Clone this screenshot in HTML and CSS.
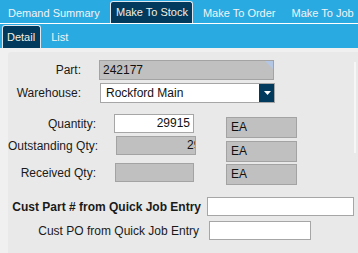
FILE: index.html
```html
<!DOCTYPE html>
<html>
<head>
<meta charset="utf-8">
<link rel="stylesheet" href="styles.css">
</head>
<body>
<div class="tabbar top">
  <div class="tab">Demand Summary</div>
  <div class="tab active">Make To Stock</div>
  <div class="tab">Make To Order</div>
  <div class="tab">Make To Job</div>
</div>
<div class="tabbar sub">
  <div class="tab active detail">Detail</div>
  <div class="tab">List</div>
</div>
<div class="content">
  <div class="panel">
    <div class="form">
      <div class="row part-row">
        <div class="label w73">Part:</div>
        <div class="field ro part">242177</div>
      </div>
      <div class="row wh-row">
        <div class="label w73">Warehouse:</div>
        <div class="field combo"><span class="combo-text">Rockford Main</span><span class="combo-btn"><svg width="7" height="4" viewBox="0 0 7 4"><path d="M0 0H7L3.5 4Z" fill="#fff"/></svg></span></div>
      </div>
      <div class="qty">
        <div class="qty-left">
          <div class="row">
            <div class="label w88">Quantity:</div>
            <div class="field num q1">29915</div>
          </div>
          <div class="row r2">
            <div class="label w89">Outstanding Qty:</div>
            <div class="field ro q2"><span class="clip">29915</span></div>
          </div>
          <div class="row r3">
            <div class="label w88">Received Qty:</div>
            <div class="field ro q3"></div>
          </div>
        </div>
        <div class="qty-right">
          <div class="field ro ea e1">EA</div>
          <div class="field ro ea e2">EA</div>
          <div class="field ro ea e3">EA</div>
        </div>
      </div>
      <div class="row cp-row">
        <div class="label bold w193">Cust Part # from Quick Job Entry</div>
        <div class="field cp"></div>
      </div>
      <div class="row po-row">
        <div class="label w191">Cust PO from Quick Job Entry</div>
        <div class="field po"></div>
      </div>
    </div>
    <div class="edge"></div>
  </div>
</div>
</body>
</html>
```

FILE: styles.css
```css
html, body {
  margin: 0;
  padding: 0;
}
body {
  width: 358px;
  height: 253px;
  overflow: hidden;
  background: #f0f0f0;
  font-family: "Liberation Sans", Arial, sans-serif;
  color: #1a1a1a;
}
.tabbar {
  display: flex;
  align-items: flex-end;
  background: #29aae1;
  white-space: nowrap;
  overflow: hidden;
}
.tabbar.top {
  height: 23px;
  border-bottom: 1px solid #ffffff;
}
.tabbar.sub {
  height: 24px;
}
.tab {
  flex: none;
  padding: 0 8px;
  font-size: 11px;
  color: #f2f4f6;
  height: 100%;
  line-height: 26px;
  box-sizing: border-box;
}
.tab.active {
  background: #013a5c;
  color: #f3f1e2;
  border: 1px solid #dfe8ee;
  border-bottom: none;
  border-radius: 3px 3px 0 0;
  padding: 0 4px 0 5px;
  margin: 0 2px 0 2.3px;
  height: 22px;
  line-height: 20px;
}
.tab.active.detail {
  margin: 0 2px 0 2px;
  padding: 0 5px 0 4px;
  height: 23px;
  line-height: 23px;
}
.content {
  padding: 4px 0 0 8px;
}
.panel {
  display: flex;
  background: #e9e9e9;
  border-radius: 3px 0 0 0;
  height: 210px;
}
.form {
  width: 346px;
  padding-top: 8px;
  font-size: 12px;
}
.edge {
  width: 2px;
  height: 91px;
  margin-top: 10px;
  background: #f6f6f6;
}
.row {
  display: flex;
  align-items: center;
}
.label {
  flex: none;
  text-align: right;
  white-space: nowrap;
  color: #1a1a1a;
}
.bold { font-weight: bold; }
.w73 { width: 73px; }
.w88 { width: 88px; }
.w89 { width: 89px; }
.w191 { width: 191px; }
.w193 { width: 193px; }
.field {
  flex: none;
  box-sizing: border-box;
  height: 19px;
  border: 1px solid #a6a6a6;
  background: #ffffff;
  color: #111;
  font-size: 12px;
  line-height: 17px;
  padding: 0 3px;
  white-space: nowrap;
  overflow: hidden;
  position: relative;
}
.field.ro {
  background: #c0c0c0;
  border-color: #a3a3a3;
}
.part {
  margin-left: 18px;
  width: 175px;
  height: 20px;
  line-height: 18px;
}
.part::after {
  content: "";
  position: absolute;
  top: -1px;
  right: -1px;
  border-top: 10px solid #b3c6e4;
  border-left: 10px solid transparent;
}
.wh-row { margin-top: 3px; }
.combo {
  margin-left: 19px;
  width: 175px;
  height: 20px;
  line-height: 18px;
  padding: 0 0 0 5px;
  display: flex;
}
.combo-text { flex: 1; }
.combo-btn {
  width: 16px;
  margin: -1px -1px -1px 0;
  background: #013a5c;
  display: flex;
  align-items: center;
  justify-content: center;
}
.qty {
  display: flex;
  margin-top: 11px;
}
.qty-left {
  width: 188px;
  flex: none;
}
.qty-right {
  margin-left: 30px;
}
.num { text-align: right; }
.q1 { margin-left: 18px; width: 80px; }
.r2 { margin-top: 3px; }
.q2 { margin-left: 19px; width: 80px; padding: 0; }
.clip {
  display: block;
  width: 78px;
  padding-left: 70px;
  box-sizing: border-box;
  overflow: hidden;
}
.r3 { margin-top: 8px; }
.q3 { margin-left: 19px; width: 79px; }
.ea {
  width: 71px;
  height: 21px;
  line-height: 19px;
  padding-left: 4px;
}
.e1 { margin-top: 3px; }
.e2 { margin-top: 3px; }
.e3 { margin-top: 2px; }
.cp-row { margin-top: 12px; }
.cp { margin-left: 6px; width: 147px; }
.po-row { margin-top: 5px; }
.po { margin-left: 10px; width: 102px; }
```
